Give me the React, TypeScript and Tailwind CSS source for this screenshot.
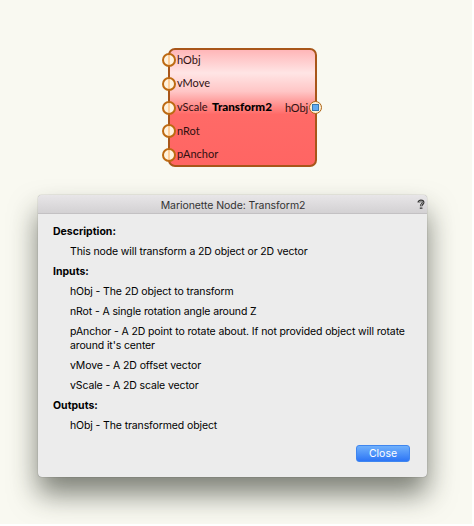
interface Entry {
  text: string;
  heading?: boolean;
}

const inputs = ['hObj', 'vMove', 'vScale', 'nRot', 'pAnchor'];

const entries: Entry[] = [
  { text: 'Description:', heading: true },
  { text: 'This node will transform a 2D object or 2D vector' },
  { text: 'Inputs:', heading: true },
  { text: 'hObj - The 2D object to transform' },
  { text: 'nRot - A single rotation angle around Z' },
  { text: "pAnchor - A 2D point to rotate about. If not provided object will rotate\naround it's center" },
  { text: 'vMove - A 2D offset vector' },
  { text: 'vScale - A 2D scale vector' },
  { text: 'Outputs:', heading: true },
  { text: 'hObj - The transformed object' },
];

function MarionetteNode() {
  return (
    <div className="relative ml-[168px] flex h-[119px] w-[149px] items-center rounded-[7px] border-2 border-[#a8561a] bg-[linear-gradient(#ffb6b8_0%,#ffe5e5_20%,#ffc6c6_36%,#ff6a67_56%,#ff6563_100%)] font-['Lato',sans-serif] text-[11px] leading-none text-[#301010]">
      <ul className="-ml-[8px] flex flex-col gap-[9.6px]">
        {inputs.map((name) => (
          <li key={name} className="flex h-[14px] items-center gap-px">
            <span className="size-[14px] rounded-full border-2 border-[#bd6a12] bg-[linear-gradient(90deg,#fff3df_35%,#ffcf9a_45%,#ffcf9a_55%,#fff3df_65%)]" />
            <span className="-mt-[2px]">{name}</span>
          </li>
        ))}
      </ul>
      <span className="absolute left-[42px] top-[51px] text-[11.7px] font-black text-black">
        Transform2
      </span>
      <div className="absolute -right-[7px] top-[50px] flex h-[14px] items-center">
        <span className="tracking-[-0.1px]">hObj</span>
        <span className="ml-px flex size-[13px] items-center justify-center rounded-full border-[1.5px] border-[#ad6314] bg-[#fff0d5]">
          <span className="size-[7px] border border-[#3978ae] bg-[#62aaf0]" />
        </span>
      </div>
    </div>
  );
}

function HelpDialog() {
  return (
    <div className="ml-[38px] mt-[28px] flex h-[282px] w-[389px] flex-col rounded-[4px] bg-[#ececec] shadow-[0_0_1px_rgba(0,0,0,0.55),0_17px_28px_rgba(35,40,30,0.58)]">
      <header className="relative flex h-[19px] shrink-0 items-center justify-center rounded-t-[4px] border-b border-[#c3c1c3] bg-linear-to-b from-[#e8e6e8] to-[#d3d1d3] pl-px pt-[4px] text-[10.5px] leading-none tracking-[-0.06px] text-[#333]">
        Marionette Node: Transform2
        <svg className="absolute right-[2px] top-[4px]" width="8" height="12" viewBox="0 0 8 12" fill="none">
          <path d="M1.7 3.5C1.7 1.2 6.2 1.2 6.2 3.5C6.2 5 4.1 5 4.1 7.2M4.1 8.5V10" stroke="#333" strokeWidth="2.5" />
          <path d="M1.9 3.5C2 1.7 6 1.7 6 3.5C6 4.8 4.1 5 4.1 7M4.1 8.9V9.6" stroke="#ccc" strokeWidth=".8" />
        </svg>
      </header>
      <div className="flex flex-col pl-[15px] pt-[11px] text-[10.5px] leading-[13.5px] text-black">
        {entries.map((entry) =>
          entry.heading ? (
            <h2 key={entry.text} className="mb-[6.5px] font-bold">
              {entry.text}
            </h2>
          ) : (
            <p key={entry.text} className="mb-[6.5px] ml-[17px] whitespace-pre tracking-[-0.12px]">
              {entry.text}
            </p>
          ),
        )}
      </div>
      <button className="mb-[15px] mr-[17px] mt-auto h-[17px] w-[54px] self-end rounded-[3px] border border-[#3f86ef] bg-linear-to-b from-[#70b0fb] to-[#2d75f5] pt-[2px] text-[10.5px] leading-none text-white">
        Close
      </button>
    </div>
  );
}

export default function App() {
  return (
    <main className="h-[526px] w-[474px] overflow-hidden bg-white font-['Inter',sans-serif]">
      <div className="h-[524px] w-[472px] overflow-hidden bg-[#f9f9f1] pt-[48px]">
        <MarionetteNode />
        <HelpDialog />
      </div>
    </main>
  );
}
